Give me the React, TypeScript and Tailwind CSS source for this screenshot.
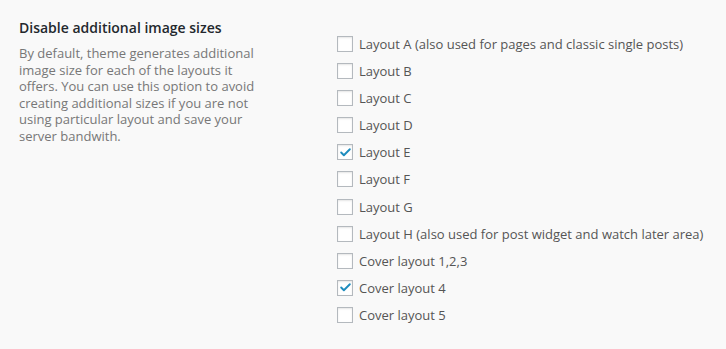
import { Check } from 'lucide-react'

const options = [
  { label: 'Layout A (also used for pages and classic single posts)', checked: false },
  { label: 'Layout B', checked: false },
  { label: 'Layout C', checked: false },
  { label: 'Layout D', checked: false },
  { label: 'Layout E', checked: true },
  { label: 'Layout F', checked: false },
  { label: 'Layout G', checked: false },
  { label: 'Layout H (also used for post widget and watch later area)', checked: false },
  { label: 'Cover layout 1,2,3', checked: false },
  { label: 'Cover layout 4', checked: true },
  { label: 'Cover layout 5', checked: false },
]

export default function App() {
  return (
    <div className="w-[726px] h-[349px] bg-[#f9f9f9] font-['Open_Sans',sans-serif] flex">
      <div className="w-[318px] pl-[19px] pt-[18px]">
        <h3 className="text-[14px] font-semibold text-[#23282d] leading-[20px]">Disable additional image sizes</h3>
        <p className="mt-[7px] w-[240px] text-[13px] leading-[16.5px] text-[#777]">
          By default, theme generates additional image size for each of the layouts it offers. You can use this option to avoid creating additional sizes if you are not using particular layout and save your server bandwith.
        </p>
      </div>
      <div className="pl-[19px] pt-[36px] flex flex-col gap-[11.1px]">
        {options.map((o) => (
          <label key={o.label} className="flex items-center gap-[6px] h-[16px]">
            <span className="w-[16px] h-[16px] bg-white border border-[#b4b9be] shadow-[inset_0_1px_2px_rgba(0,0,0,0.1)] flex items-center justify-center">
              {o.checked && <Check size={13} strokeWidth={3.5} className="text-[#1e8cbe]" />}
            </span>
            <span className="text-[13px] text-[#555] leading-[16px]">{o.label}</span>
          </label>
        ))}
      </div>
    </div>
  )
}
